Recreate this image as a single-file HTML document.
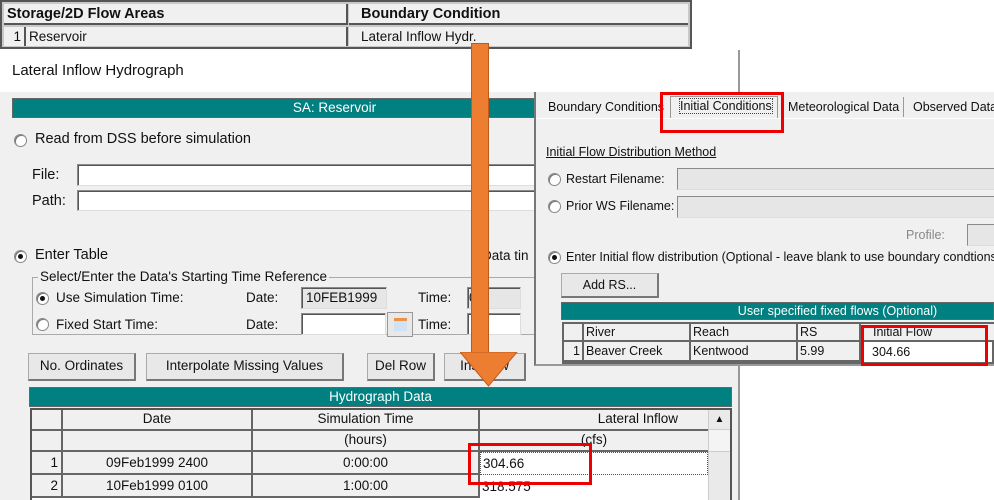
<!DOCTYPE html>
<html><head><style>
*{box-sizing:border-box;margin:0;padding:0}
body{width:994px;height:500px;position:relative;overflow:hidden;background:#fff;font-family:"Liberation Sans",sans-serif;font-size:13.5px;color:#111}
.a{position:absolute;white-space:nowrap}
.in{position:absolute;background:#fff;border:1px solid #8a8a8a;border-right-color:#ddd;border-bottom-color:#ddd;box-shadow:inset 1px 1px 0 #555}
.dis{background:#e6e6e6}
.btn{position:absolute;background:#e8e8e8;border:1px solid #aaa;border-right:2px solid #777;border-bottom:2px solid #777;text-align:center;line-height:24px}
.teal{position:absolute;background:#008080;color:#fff;text-align:center;border:1px solid #666}
.rad{position:absolute;width:13px;height:13px;border-radius:50%;background:#fff;border:1px solid #888;box-shadow:inset 1px 1px 0 #777}
.rad.on::after{content:"";position:absolute;left:3px;top:3px;width:5px;height:5px;border-radius:50%;background:#111}
.cell{position:absolute;border-right:2px solid #666;border-bottom:2px solid #666;background:#f0f0f0;text-align:center;line-height:18px}
.red{position:absolute;border:3px solid #e00}
</style></head><body>
<div class="a" style="left:0;top:0;width:692px;height:49px;background:#c8c8c8;border:2px solid #555"></div>
<div class="a" style="left:4px;top:4px;width:344px;height:21px;background:#f0f0f0;border-right:2px solid #555;border-bottom:2px solid #555;font-weight:bold;font-size:14.5px;padding-left:3px;line-height:21px">Storage/2D Flow Areas</div>
<div class="a" style="left:349px;top:4px;width:339px;height:21px;background:#f0f0f0;border-bottom:2px solid #555;font-weight:bold;font-size:14.5px;padding-left:12px;line-height:21px">Boundary Condition</div>
<div class="a" style="left:4px;top:27px;width:22px;height:19px;background:#f0f0f0;border-right:2px solid #555;text-align:right;padding-right:3px;line-height:19px">1</div>
<div class="a" style="left:26px;top:27px;width:322px;height:19px;background:#f0f0f0;border-right:2px solid #555;padding-left:3px;line-height:19px">Reservoir</div>
<div class="a" style="left:349px;top:27px;width:339px;height:19px;background:#f0f0f0;padding-left:12px;line-height:19px">Lateral Inflow Hydr.</div>
<div class="a" style="left:0;top:50px;width:740px;height:450px;background:#f0f0f0;border-right:2px solid #999"></div>
<div class="a" style="left:0;top:50px;width:738px;height:42px;background:#fff;font-size:15px;padding:12px 0 0 12px">Lateral Inflow Hydrograph</div>
<div class="teal" style="left:12px;top:98px;width:525px;height:20px;line-height:18px;padding-left:120px">SA: Reservoir</div>
<div class="rad" style="left:14px;top:134px"></div><div class="a" style="left:35px;top:131px;font-size:14.5px">Read from DSS before simulation</div>
<div class="a" style="left:32px;top:167px;font-size:14.5px">File:</div><div class="in" style="left:77px;top:164px;width:460px;height:22px"></div>
<div class="a" style="left:32px;top:193px;font-size:14.5px">Path:</div><div class="in" style="left:77px;top:190px;width:460px;height:21px"></div>
<div class="rad on" style="left:14px;top:250px"></div><div class="a" style="left:35px;top:247px;font-size:14.5px">Enter Table</div>
<div class="a" style="left:482px;top:248px">Data tin</div>
<div class="a" style="left:32px;top:277px;width:510px;height:58px;border:1px solid #aaa"></div>
<div class="a" style="left:38px;top:269px;background:#f0f0f0;padding:0 2px">Select/Enter the Data's Starting Time Reference</div>
<div class="rad on" style="left:36px;top:292px"></div><div class="a" style="left:56px;top:290px">Use Simulation Time:</div>
<div class="a" style="left:246px;top:290px">Date:</div><div class="in dis" style="left:301px;top:287px;width:86px;height:22px;padding:2px 4px">10FEB1999</div>
<div class="a" style="left:418px;top:290px">Time:</div><div class="in dis" style="left:467px;top:287px;width:54px;height:22px;padding:2px 1px">00</div>
<div class="rad" style="left:36px;top:318px"></div><div class="a" style="left:56px;top:317px">Fixed Start Time:</div>
<div class="a" style="left:246px;top:317px">Date:</div><div class="in" style="left:301px;top:313px;width:85px;height:22px"></div>
<div class="a" style="left:387px;top:312px;width:26px;height:25px;background:#e8e8e8;border:1px solid #999"><div style="position:absolute;left:6px;top:5px;width:13px;height:13px;background:#cfe3f5;border-top:3px solid #e8924a"></div></div>
<div class="a" style="left:418px;top:317px">Time:</div><div class="in" style="left:467px;top:313px;width:54px;height:22px"></div>
<div class="btn" style="left:28px;top:353px;width:108px;height:28px">No. Ordinates</div>
<div class="btn" style="left:146px;top:353px;width:198px;height:28px">Interpolate Missing Values</div>
<div class="btn" style="left:367px;top:353px;width:68px;height:28px">Del Row</div>
<div class="btn" style="left:444px;top:353px;width:82px;height:28px">Ins Row</div>
<div class="teal" style="left:29px;top:387px;width:703px;height:20px;line-height:18px">Hydrograph Data</div>
<div class="a" style="left:30px;top:408px;width:702px;height:92px;background:#fff;border:2px solid #555;border-bottom:none"></div>
<div class="cell" style="left:32px;top:410px;width:31px;height:21px"></div>
<div class="cell" style="left:63px;top:410px;width:190px;height:21px">Date</div>
<div class="cell" style="left:253px;top:410px;width:227px;height:21px">Simulation Time</div>
<div class="cell" style="left:480px;top:410px;width:228px;height:21px;text-align:right;padding-right:30px;border-right:none">Lateral Inflow</div>
<div class="cell" style="left:32px;top:431px;width:31px;height:21px"></div>
<div class="cell" style="left:63px;top:431px;width:190px;height:21px"></div>
<div class="cell" style="left:253px;top:431px;width:227px;height:21px">(hours)</div>
<div class="cell" style="left:480px;top:431px;width:228px;height:21px;border-right:none">(cfs)</div>
<div class="a" style="left:708px;top:410px;width:22px;height:90px;background:#eaeaea;border-left:1px solid #ccc"><div style="height:20px;text-align:center;font-size:10px;line-height:20px;border-bottom:1px solid #ccc">▲</div><div style="height:22px;border-bottom:1px solid #ccc;background:#f4f4f4"></div></div>
<div class="cell" style="left:32px;top:452px;width:31px;height:23px;text-align:right;padding-right:3px;line-height:22px">1</div>
<div class="cell" style="left:63px;top:452px;width:190px;height:23px;line-height:22px">09Feb1999 2400</div>
<div class="cell" style="left:253px;top:452px;width:227px;height:23px;line-height:22px">0:00:00</div>
<div class="a" style="left:480px;top:452px;width:228px;height:23px;background:#fff;border:1px dotted #555;line-height:22px;padding-left:2px">304.66</div>
<div class="cell" style="left:32px;top:475px;width:31px;height:23px;text-align:right;padding-right:3px;line-height:22px">2</div>
<div class="cell" style="left:63px;top:475px;width:190px;height:23px;line-height:22px">10Feb1999 0100</div>
<div class="cell" style="left:253px;top:475px;width:227px;height:23px;line-height:22px">1:00:00</div>
<div class="a" style="left:482px;top:476px;line-height:22px">318.575</div>
<div class="red" style="left:468px;top:443px;width:124px;height:42px"></div>
<div class="a" style="left:534px;top:92px;width:460px;height:274px;background:#f0f0f0;border-left:2px solid #777;border-bottom:2px solid #999"></div>
<div class="a" style="left:536px;top:118px;width:458px;height:1px;background:#fff"></div>
<div class="a" style="left:548px;top:100px;font-size:12.5px">Boundary Conditions</div>
<div class="a" style="left:670px;top:96px;width:108px;height:22px;border:1px solid #999;border-bottom:none;background:#f0f0f0"></div>
<div class="a" style="left:680px;top:99px;font-size:12.5px;outline:1px dotted #444">Initial Conditions</div>
<div class="a" style="left:788px;top:100px;font-size:12.5px">Meteorological Data</div>
<div class="a" style="left:903px;top:97px;width:1px;height:20px;background:#999"></div>
<div class="a" style="left:913px;top:100px;font-size:12.5px">Observed Data</div>
<div class="red" style="left:660px;top:92px;width:124px;height:41px"></div>
<div class="a" style="left:546px;top:145px;font-size:12.5px;text-decoration:underline">Initial Flow Distribution Method</div>
<div class="rad" style="left:548px;top:173px"></div><div class="a" style="left:566px;top:172px;font-size:12.5px">Restart Filename:</div>
<div class="in dis" style="left:677px;top:168px;width:320px;height:22px;box-shadow:none"></div>
<div class="rad" style="left:548px;top:200px"></div><div class="a" style="left:566px;top:199px;font-size:12.5px">Prior WS Filename:</div>
<div class="in dis" style="left:677px;top:196px;width:320px;height:22px;box-shadow:none"></div>
<div class="a" style="left:906px;top:228px;font-size:12.5px;color:#888">Profile:</div>
<div class="in dis" style="left:967px;top:224px;width:30px;height:22px;box-shadow:none"></div>
<div class="rad on" style="left:548px;top:251px"></div><div class="a" style="left:566px;top:250px;font-size:12.5px">Enter Initial flow distribution (Optional - leave blank to use boundary condtions)</div>
<div class="btn" style="left:561px;top:273px;width:98px;height:25px;line-height:22px;font-size:12.5px">Add RS...</div>
<div class="teal" style="left:561px;top:302px;width:433px;height:18px;line-height:16px;font-size:12.5px;padding-left:120px">User specified fixed flows (Optional)</div>
<div class="a" style="left:562px;top:322px;width:432px;height:42px;background:#fff;border:2px solid #666"></div>
<div class="cell" style="left:564px;top:324px;width:20px;height:18px"></div>
<div class="cell" style="left:584px;top:324px;width:107px;height:18px;text-align:left;padding-left:2px;font-size:12.5px;line-height:16px">River</div>
<div class="cell" style="left:691px;top:324px;width:107px;height:18px;text-align:left;padding-left:2px;font-size:12.5px;line-height:16px">Reach</div>
<div class="cell" style="left:798px;top:324px;width:63px;height:18px;text-align:left;padding-left:2px;font-size:12.5px;line-height:16px">RS</div>
<div class="cell" style="left:861px;top:324px;width:133px;height:18px;text-align:left;padding-left:12px;font-size:12.5px;line-height:16px;border-right:none">Initial Flow</div>
<div class="cell" style="left:564px;top:342px;width:20px;height:20px;text-align:right;padding-right:2px;font-size:12.5px">1</div>
<div class="cell" style="left:584px;top:342px;width:107px;height:20px;text-align:left;padding-left:2px;font-size:12.5px">Beaver Creek</div>
<div class="cell" style="left:691px;top:342px;width:107px;height:20px;text-align:left;padding-left:2px;font-size:12.5px">Kentwood</div>
<div class="cell" style="left:798px;top:342px;width:63px;height:20px;text-align:left;padding-left:2px;font-size:12.5px">5.99</div>
<div class="a" style="left:872px;top:343px;font-size:12.5px;line-height:18px">304.66</div>
<div class="red" style="left:861px;top:325px;width:127px;height:41px"></div>
<div class="a" style="left:471px;top:43px;width:18px;height:312px;background:#ed7d31;border:1px solid #c05a1a"></div>
<svg class="a" style="left:460px;top:352px" width="58" height="36"><polygon points="0,0 57,0 28.5,34" fill="#ed7d31" stroke="#c05a1a"/></svg>
</body></html>
